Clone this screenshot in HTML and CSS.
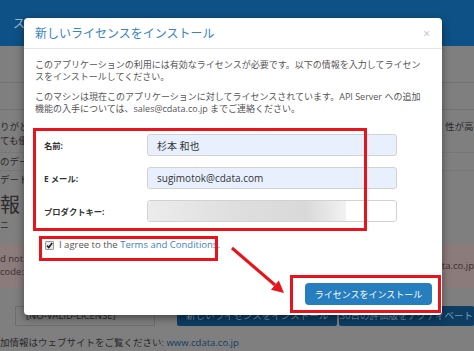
FILE: index.html
```html
<!DOCTYPE html>
<html lang="ja">
<head>
<meta charset="utf-8">
<title>新しいライセンスをインストール</title>
<link rel="stylesheet" href="styles.css">
</head>
<body>
<div class="page">
  <header class="topbar"><span class="brand">ス</span></header>
  <div class="band band-a"></div>
  <div class="band band-b"></div>
  <div class="content">
    <div class="line-row two">
      <div class="left-txt">りがと<br>ても優</div>
      <div class="right-txt">性が高</div>
    </div>
    <div class="row-line">のデー</div>
    <div class="row-line">デート</div>
    <div class="heading">報</div>
    <div class="small">ニ</div>
    <div class="alert">
      <div class="alert-left">d not<br>code:</div>
      <div class="alert-right">ata.co.jp</div>
    </div>
    <div class="actions">
      <div class="lic-box">[NO-VALID-LICENSE]</div>
      <div class="dark-btn first">新しいライセンスをインストール</div>
      <div class="dark-btn">30日の評価版をアクティベート</div>
    </div>
    <div class="foot-txt">加情報はウェブサイトをご覧ください: <span class="foot-link">www.cdata.co.jp</span></div>
  </div>
</div>

<div class="modal">
  <div class="modal-header">
    <span class="modal-title">新しいライセンスをインストール</span>
    <span class="close">×</span>
  </div>
  <div class="modal-body">
    <p>このアプリケーションの利用には有効なライセンスが必要です。以下の情報を入力してライセン<br>スをインストールしてください。</p>
    <p>このマシンは現在このアプリケーションに対してライセンスされています。API Server への追加<br>機能の入手については、sales@cdata.co.jp までご連絡ください。</p>
    <div class="form">
      <div class="form-row">
        <label class="lbl">名前:</label>
        <div class="field filled">杉本 和也</div>
      </div>
      <div class="form-row">
        <label class="lbl">E メール:</label>
        <div class="field filled">sugimotok@cdata.com</div>
      </div>
      <div class="form-row">
        <label class="lbl">プロダクトキー:</label>
        <div class="field"><span class="redact"></span></div>
      </div>
    </div>
    <div class="agree">
      <span class="cb"><svg width="9" height="9" viewBox="0 0 9 9"><path d="M2 4.6 L3.8 6.6 L7.2 2" fill="none" stroke="#222" stroke-width="1.6"/></svg></span>
      <span class="agree-txt">I agree to the <span class="link">Terms and Conditions.</span></span>
    </div>
  </div>
  <div class="modal-footer">
    <button class="btn-primary">ライセンスをインストール</button>
  </div>

  <div class="mark mark-form"></div>
  <div class="mark mark-agree"></div>
  <div class="mark mark-btn"></div>
  <svg class="arrow" width="70" height="60" viewBox="0 0 70 60">
    <line x1="8" y1="6" x2="51" y2="43" stroke="#e8131b" stroke-width="3"/>
    <polygon points="60,51 47,47.7 54.8,38.6" fill="#e8131b"/>
  </svg>
</div>
</body>
</html>
```

FILE: styles.css
```css
* { box-sizing: border-box; }
html, body { margin: 0; padding: 0; }
body {
  width: 474px;
  height: 351px;
  overflow: hidden;
  font-family: "Open Sans", "Noto Sans CJK JP", sans-serif;
  position: relative;
}
.page {
  height: 351px;
  background: #7f7f7f;
  color: #2a2a2a;
  overflow: hidden;
}
.topbar {
  height: 46px;
  background: #0e5186;
  color: #9fb9d0;
  font-size: 12px;
  display: flex;
  align-items: center;
  padding-left: 13px;
}
.band-a { height: 37px; border-bottom: 1px solid #727272; }
.band-b { height: 27px; border-bottom: 1px solid #727272; }
.content { font-size: 9.5px; padding-top: 10px; }
.line-row { display: flex; line-height: 14px; }
.left-txt { width: 445px; flex: none; }
.right-txt { flex: none; white-space: nowrap; }
.row-line { line-height: 17px; height: 18px; border-top: 1px solid #777; }
.line-row + .row-line { margin-top: 4px; }
.heading { font-size: 20px; line-height: 26px; margin-top: 4px; color: #2c2c2c; }
.small { font-size: 9px; line-height: 14px; }
.alert {
  margin-top: 12px;
  height: 44px;
  background: #8b7b7b;
  display: flex;
  justify-content: space-between;
  padding-top: 8px;
  line-height: 13px;
  color: #3a2f2f;
}
.alert-right { padding-top: 7px; }
.actions {
  margin-top: 18px;
  height: 20px;
  display: flex;
  align-items: stretch;
}
.lic-box {
  margin-left: 15px;
  width: 145px;
  border: 1px solid #6e6e6e;
  padding-left: 10px;
  line-height: 18px;
  color: #2b2b2b;
}
.dark-btn {
  margin-left: 22px;
  width: 165px;
  background: #0d3d63;
  color: #7f98ad;
  border-radius: 2px;
  text-align: center;
  line-height: 20px;
  white-space: nowrap;
  overflow: hidden;
}
.dark-btn + .dark-btn { margin-left: 2px; width: 140px; }
.foot-txt { margin-top: 10px; line-height: 14px; white-space: nowrap; }
.foot-link { color: #0d3d63; }

/* modal */
.modal {
  position: absolute;
  left: 24px;
  top: 18px;
  width: 418px;
  height: 297px;
  background: #fff;
  border-radius: 4px;
  box-shadow: 0 3px 9px rgba(0,0,0,0.45);
  display: flex;
  flex-direction: column;
}
.modal-header {
  height: 31px;
  border-bottom: 1px solid #e5e5e5;
  display: flex;
  align-items: center;
  justify-content: space-between;
  padding: 0 12px 0 11px;
}
.modal-title { font-size: 12px; color: #3a84c2; }
.close { font-size: 12px; color: #c2c2c2; }
.modal-body { padding: 10px 11px 0; color: #555; }
.modal-body p { margin: 0 0 8px; font-size: 9px; line-height: 12px; white-space: nowrap; }
.form { margin-top: 19px; padding-left: 9px; display: flex; flex-direction: column; gap: 11px; }
.form-row { display: flex; align-items: center; }
.lbl { width: 103px; font-size: 8.3px; font-weight: bold; color: #333; }
.field {
  width: 250px;
  height: 22px;
  border: 1px solid #d2d2d2;
  border-radius: 3px;
  background: #fff;
  font-size: 10px;
  color: #333;
  padding-left: 9px;
  display: flex;
  align-items: center;
  position: relative;
}
.field.filled { background: #e8f0fe; }
.redact {
  position: absolute;
  left: 0;
  top: 0;
  bottom: 0;
  width: 198px;
  border-radius: 3px 0 0 3px;
  background: linear-gradient(90deg, #ececec 0%, #dedede 45%, #d9d9d9 80%, #f2f2f2 100%);
}
.agree { margin-top: 17px; padding-left: 10px; display: flex; align-items: center; gap: 5px; }
.cb {
  width: 9px; height: 9px;
  border: 1px solid #9a9a9a;
  background: #eaeaea;
  border-radius: 1px;
  display: flex;
}
.cb svg { margin: -1px; }
.agree-txt { font-size: 9.5px; color: #555; line-height: 12px; }
.link { color: #3a84c2; }
.modal-footer {
  margin-top: auto;
  display: flex;
  justify-content: flex-end;
  padding: 0 10px 10px;
}
.btn-primary {
  width: 127px;
  height: 22px;
  border: none;
  border-radius: 4px;
  background: #267ebe;
  color: #fff;
  font-family: "Noto Sans CJK JP", sans-serif;
  font-size: 9px;
  padding: 0;
}
.mark { position: absolute; border: 3px solid #e8131b; }
.mark-form { left: 9px; top: 110px; width: 334px; height: 103px; }
.mark-agree { left: 15px; top: 218px; width: 179px; height: 25px; }
.mark-btn { left: 266px; top: 257px; width: 151px; height: 38px; }
.arrow { position: absolute; left: 200px; top: 224px; }
```
